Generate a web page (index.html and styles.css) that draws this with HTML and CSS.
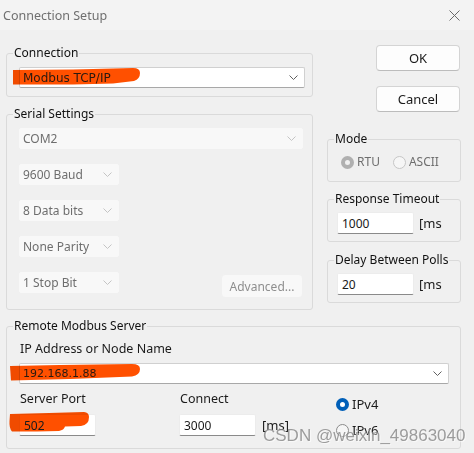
FILE: index.html
```html
<!DOCTYPE html>
<html lang="en">
<head>
    <meta charset="UTF-8">
    <title>Connection Setup</title>
    <link rel="stylesheet" href="styles.css">
</head>
<body>
    <div class="dialog">
        <div class="titlebar">
            <span class="title">Connection Setup</span>
            <svg class="close" width="11" height="11" viewBox="0 0 11 11"><path d="M0.5 0.5 L10.5 10.5 M10.5 0.5 L0.5 10.5" stroke="#6a6a6a" stroke-width="1" fill="none"/></svg>
        </div>

        <div class="main">
            <div class="col-left">
                <fieldset class="group">
                    <legend>Connection</legend>
                    <div class="conn-body">
                        <div class="combo combo-wide tahoma">
                            <svg class="mark mark-conn" width="127" height="17" viewBox="0 0 127 17"><path d="M0 2 L60 1.5 L120 0 Q127 0 127 5 Q127 11 121 13 L100 15.5 L60 16.5 L0 16.5 Z" fill="#ff5000"/></svg>
                            <span class="val">Modbus TCP/IP</span>
                            <svg class="chev" width="9" height="5" viewBox="0 0 9 5"><path d="M0.5 0.5 L4.5 4.5 L8.5 0.5" stroke="#606060" fill="none"/></svg>
                        </div>
                    </div>
                </fieldset>

                <fieldset class="group serial">
                    <legend>Serial Settings</legend>
                    <div class="serial-body">
                        <div class="combo combo-wide disabled">
                            <span class="val">COM2</span>
                            <svg class="chev" width="9" height="5" viewBox="0 0 9 5"><path d="M0.5 0.5 L4.5 4.5 L8.5 0.5" stroke="#c4c4c4" fill="none"/></svg>
                        </div>
                        <div class="combo combo-small disabled">
                            <span class="val">9600 Baud</span>
                            <svg class="chev" width="9" height="5" viewBox="0 0 9 5"><path d="M0.5 0.5 L4.5 4.5 L8.5 0.5" stroke="#c4c4c4" fill="none"/></svg>
                        </div>
                        <div class="combo combo-small disabled">
                            <span class="val">8 Data bits</span>
                            <svg class="chev" width="9" height="5" viewBox="0 0 9 5"><path d="M0.5 0.5 L4.5 4.5 L8.5 0.5" stroke="#c4c4c4" fill="none"/></svg>
                        </div>
                        <div class="combo combo-small disabled">
                            <span class="val">None Parity</span>
                            <svg class="chev" width="9" height="5" viewBox="0 0 9 5"><path d="M0.5 0.5 L4.5 4.5 L8.5 0.5" stroke="#c4c4c4" fill="none"/></svg>
                        </div>
                        <div class="serial-last">
                            <div class="combo combo-small disabled">
                                <span class="val">1 Stop Bit</span>
                                <svg class="chev" width="9" height="5" viewBox="0 0 9 5"><path d="M0.5 0.5 L4.5 4.5 L8.5 0.5" stroke="#c4c4c4" fill="none"/></svg>
                            </div>
                            <button class="btn btn-adv" disabled>Advanced...</button>
                        </div>
                    </div>
                </fieldset>
            </div>

            <div class="col-right">
                <button class="btn btn-main">OK</button>
                <button class="btn btn-main btn-cancel">Cancel</button>

                <fieldset class="group mode">
                    <legend>Mode</legend>
                    <div class="mode-body">
                        <span class="radio-item disabled"><span class="radio checked"></span>RTU</span>
                        <span class="radio-item disabled"><span class="radio"></span>ASCII</span>
                    </div>
                </fieldset>

                <fieldset class="group timing">
                    <legend>Response Timeout</legend>
                    <div class="timing-body">
                        <div class="input">1000</div>
                        <span class="unit">[ms</span>
                    </div>
                </fieldset>

                <fieldset class="group timing delay">
                    <legend>Delay Between Polls</legend>
                    <div class="timing-body">
                        <div class="input">20</div>
                        <span class="unit">[ms</span>
                    </div>
                </fieldset>
            </div>
        </div>

        <fieldset class="group remote">
            <legend>Remote Modbus Server</legend>
            <div class="remote-body">
                <div class="field-label">IP Address or Node Name</div>
                <div class="combo combo-ip tahoma">
                    <svg class="mark mark-ip" width="130" height="17" viewBox="0 0 130 17"><path d="M0 2 L50 1 L122 0 Q130 0 130 5 Q130 11 122 12.5 L60 15 L1 16.5 Z" fill="#ff5000"/></svg>
                    <span class="val">192.168.1.88</span>
                    <svg class="chev" width="9" height="5" viewBox="0 0 9 5"><path d="M0.5 0.5 L4.5 4.5 L8.5 0.5" stroke="#606060" fill="none"/></svg>
                </div>
                <div class="remote-row">
                    <div class="port-col">
                        <div class="field-label">Server Port</div>
                        <div class="input">
                            <svg class="mark mark-port" width="80" height="20" viewBox="0 0 80 20"><path d="M1 2 L40 1 L75 0 Q80 0.5 80 5 Q80 13 72 14 L56 14.5 Q55 18 50 19 L28 19.5 L3 19.5 Q0 16 0.5 9 Z" fill="#ff5000"/></svg>
                            <span class="val">502</span>
                        </div>
                    </div>
                    <div class="connect-col">
                        <div class="field-label">Connect</div>
                        <div class="connect-row">
                            <div class="input">3000</div>
                            <span class="unit">[ms]</span>
                        </div>
                    </div>
                    <div class="ip-col">
                        <span class="radio-item"><span class="radio checked blue"></span>IPv4</span>
                        <span class="radio-item"><span class="radio"></span>IPv6</span>
                    </div>
                </div>
            </div>
        </fieldset>

        <div class="watermark">CSDN @weixin_49863040</div>
    </div>
</body>
</html>
```

FILE: styles.css
```css
body {
    margin: 0;
    background-color: #f0f0f0;
    font-family: "Noto Sans", "Open Sans", sans-serif;
    font-size: 12px;
    color: #1a1a1a;
}
.dialog {
    position: relative;
    width: 474px;
    height: 453px;
    overflow: hidden;
}
.titlebar {
    height: 30px;
    display: flex;
    align-items: center;
    justify-content: space-between;
    padding: 0 14px 0 3px;
    background-color: #f3f3f3;
}
.title {
    font-size: 12.5px;
    color: #6f6f6f;
}

.main {
    display: grid;
    grid-template-columns: 307px 134px;
    column-gap: 14px;
    padding-left: 6px;
    margin-top: 15px;
}

/* group boxes */
.group {
    margin: 0;
    padding: 0;
    border: 1px solid #dadada;
    border-radius: 3px;
    min-width: 0;
}
.group legend {
    margin-left: 6px;
    padding: 0 1px;
    line-height: 16px;
    font-size: 12px;
    color: #111;
}
.conn-body {
    padding: 6px 7px 8px 12px;
}
.serial {
    margin-top: 9px;
}
.serial-body {
    padding: 6px 9px 11px 12px;
    display: flex;
    flex-direction: column;
    gap: 15px;
}
.serial-last {
    display: flex;
    justify-content: space-between;
    align-items: flex-start;
}

/* combos */
.combo {
    position: relative;
    height: 21px;
    box-sizing: border-box;
    display: flex;
    align-items: center;
    justify-content: space-between;
    padding: 0 6px 0 3px;
    background-color: #fff;
    border: 1px solid #d0d0d0;
    border-bottom-color: #a8a8a8;
    border-radius: 2px;
}
.combo .val {
    position: relative;
}
.combo-small {
    width: 100px;
}
.combo.disabled {
    background-color: #f8f8f8;
    border-color: #f8f8f8;
    color: #6e6e6e;
}
.tahoma {
    font-family: "DejaVu Sans", sans-serif;
    font-size: 11px;
    color: #2a1a10;
}
.conn-body .tahoma {
    font-size: 12px;
}
.combo-ip {
    margin-top: 6px;
}
.mark {
    position: absolute;
    mix-blend-mode: multiply;
}
.mark-conn {
    left: -7px;
    top: 0;
}
.mark-ip {
    left: -10px;
    top: 0;
}
.mark-port {
    left: -11px;
    top: -3px;
}

/* buttons */
.btn {
    font-family: inherit;
    font-size: 13px;
    color: #1a1a1a;
    background-color: #fdfdfd;
    border: 1px solid #d4d4d4;
    border-bottom-color: #bcbcbc;
    border-radius: 4px;
    padding: 0;
}
.btn-main {
    display: block;
    width: 84px;
    height: 26px;
    margin-left: auto;
    margin-right: 1px;
}
.btn-cancel {
    margin-top: 15px;
}
.btn-adv {
    width: 82px;
    height: 24px;
    margin-top: 2px;
    font-size: 12px;
    color: #8e8e8e;
    background-color: #f8f8f8;
    border-color: #f0f0f0;
}

/* radios */
.radio-item {
    display: inline-flex;
    align-items: center;
    gap: 3px;
    line-height: 16px;
}
.radio-item.disabled {
    color: #6e6e6e;
}
.radio {
    width: 13px;
    height: 13px;
    box-sizing: border-box;
    border-radius: 50%;
    border: 1px solid #8b8b8b;
    background-color: #f6f6f6;
}
.disabled .radio {
    border-color: #c6c6c6;
}
.radio.checked {
    border: 4px solid #b0b0b0;
    background-color: #f0f0f0;
}
.radio.checked.blue {
    border-color: #005fb8;
    background-color: #fff;
}

.mode {
    margin-top: 19px;
}
.mode-body {
    padding: 7px 8px 11px 13px;
    display: flex;
    gap: 13px;
}
.timing {
    margin-top: 9px;
}
.delay {
    margin-top: 10px;
}
.timing-body {
    padding: 5px 0 7px 9px;
    display: flex;
    align-items: center;
    gap: 5px;
}

/* text inputs */
.input {
    position: relative;
    width: 77px;
    height: 22px;
    box-sizing: border-box;
    padding-left: 4px;
    display: flex;
    align-items: center;
    background-color: #fff;
    border: 1px solid #ececec;
    border-bottom-color: #8a8a8a;
    border-radius: 2px;
}
.input .val {
    position: relative;
}
.unit {
    font-size: 13px;
}

/* remote server */
.remote {
    margin: 8px 0 0 6px;
    width: 455px;
    box-sizing: border-box;
}
.remote-body {
    padding: 7px 11px 10px 12px;
}
.field-label {
    line-height: 16px;
    font-size: 12.5px;
    padding-left: 1px;
}
.remote-row {
    display: grid;
    grid-template-columns: 160px 157px 1fr;
    margin-top: 7px;
}
.port-col .input,
.connect-row {
    margin-top: 7px;
}
.connect-row {
    display: flex;
    align-items: center;
    gap: 6px;
}
.ip-col {
    display: flex;
    flex-direction: column;
    gap: 10px;
    padding-top: 5px;
}
.ip-col .radio-item {
    font-size: 13px;
}

.watermark {
    position: absolute;
    left: 263px;
    top: 426px;
    font-family: "Liberation Sans", Arial, sans-serif;
    font-size: 17px;
    color: rgba(140, 140, 140, 0.85);
    text-shadow: 1px 1px 1px rgba(255, 255, 255, 0.7);
    white-space: nowrap;
}
```
